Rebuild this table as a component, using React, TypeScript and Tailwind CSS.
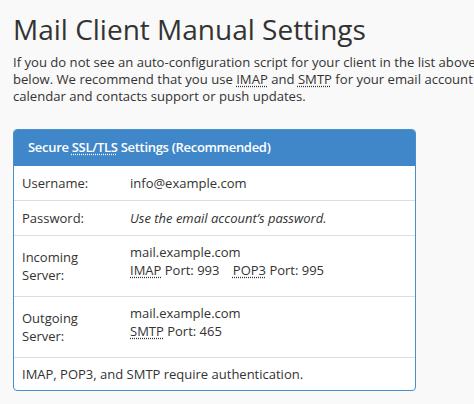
import React from "react";

const Abbr = ({ children }: { children: React.ReactNode }) => (
  <abbr className="no-underline [text-decoration:underline_dotted] decoration-[#999] underline-offset-2">
    {children}
  </abbr>
);

const TallRow = ({ label, children }: { label: React.ReactNode; children: React.ReactNode }) => (
  <div className="flex border-t border-[#dddddd] px-2 pb-[12px] pt-[7px] leading-[18px]">
    <div className="mt-[5px] w-[108px] shrink-0">{label}</div>
    <div>{children}</div>
  </div>
);

export default function App() {
  return (
    <div
      className="h-[404px] w-[474px] overflow-hidden bg-[#f9f9f9] text-[#333333]"
      style={{ fontFamily: '"Open Sans", sans-serif' }}
    >
      <div className="px-[13px] pt-[8px]">
        <h1 className="whitespace-nowrap text-[28px] leading-[42px]">Mail Client Manual Settings</h1>
        <p className="mt-[4px] whitespace-nowrap text-[13.1px] leading-[17px]">
          If you do not see an auto-configuration script for your client in the list above, you can manually configure
          <br />
          below. We recommend that you use <Abbr>IMAP</Abbr> and <Abbr>SMTP</Abbr> for your email account rather than POP3.
          <br />
          calendar and contacts support or push updates.
        </p>
        <div className="mt-[24px] w-[403px] overflow-hidden rounded-[4px] border border-[#4a8fcd] bg-white text-[13px]">
          <div className="flex h-[36px] items-center bg-[#3f87c9] px-[14px] font-semibold tracking-[-0.3px] text-white">
            <span>
              Secure <Abbr>SSL/TLS</Abbr> Settings (Recommended)
            </span>
          </div>
          <div className="flex px-2 py-2 leading-[18px]">
            <div className="w-[108px] shrink-0">Username:</div>
            <div>info@example.com</div>
          </div>
          <div className="flex border-t border-[#dddddd] px-2 py-2 leading-[18px]">
            <div className="w-[108px] shrink-0">Password:</div>
            <em>Use the email account’s password.</em>
          </div>
          <TallRow
            label={
              <>
                Incoming
                <br />
                Server:
              </>
            }
          >
            <div>mail.example.com</div>
            <div>
              <Abbr>IMAP</Abbr> Port: 993 <span className="ml-[10px]"><Abbr>POP3</Abbr> Port: 995</span>
            </div>
          </TallRow>
          <TallRow
            label={
              <>
                Outgoing
                <br />
                Server:
              </>
            }
          >
            <div>mail.example.com</div>
            <div>
              <Abbr>SMTP</Abbr> Port: 465
            </div>
          </TallRow>
          <div className="border-t border-[#dddddd] px-2 py-2 leading-[16px]">
            IMAP, POP3, and SMTP require authentication.
          </div>
        </div>
      </div>
    </div>
  );
}
